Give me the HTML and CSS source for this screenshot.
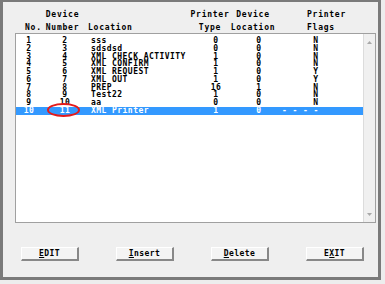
FILE: index.html
```html
<!DOCTYPE html>
<html lang="en">
<head>
<meta charset="UTF-8" />
<title>Printer Setup</title>
<link rel="stylesheet" href="styles.css">
</head>
<body>
<div class="window">
  <div class="head-row">
    <span></span>
    <span class="center">Device</span>
    <span></span>
    <span class="center">Printer</span>
    <span class="center">Device</span>
    <span class="flags-head">Printer</span>
  </div>
  <div class="head-row second">
    <span class="no-head">No.</span>
    <span class="center">Number</span>
    <span class="loc-head">Location</span>
    <span class="center">Type</span>
    <span class="center">Location</span>
    <span class="flags-head">Flags</span>
  </div>

  <div class="list-box">
    <div class="rows" id="rows"></div>
    <div class="scroll">
      <svg width="5" height="3" viewBox="0 0 5 3"><path d="M0 3 L2.5 0 L5 3 Z" fill="#a8a8a8"/></svg>
      <svg width="5" height="3" viewBox="0 0 5 3"><path d="M0 0 L2.5 3 L5 0 Z" fill="#a8a8a8"/></svg>
    </div>
  </div>

  <div class="buttons">
    <button><u>E</u>DIT</button>
    <button><u>I</u>nsert</button>
    <button><u>D</u>elete</button>
    <button>E<u>X</u>IT</button>
  </div>
</div>

<script>
  const printers = [
    [1, 2, 'sss', 0, 0, 'N'],
    [2, 3, 'sdsdsd', 0, 0, 'N'],
    [3, 4, 'XML CHECK ACTIVITY', 1, 0, 'N'],
    [4, 5, 'XML CONFIRM', 1, 0, 'N'],
    [5, 6, 'XML REQUEST', 1, 0, 'Y'],
    [6, 7, 'XML OUT', 1, 0, 'Y'],
    [7, 8, 'PREP', 16, 1, 'N'],
    [8, 9, 'Test22', 1, 0, 'N'],
    [9, 10, 'aa', 0, 0, 'N'],
    [10, 11, 'XML Printer', 1, 0, '- - - -']
  ];
  const rows = document.getElementById('rows');
  printers.forEach((p, i) => {
    const row = document.createElement('div');
    const last = i === printers.length - 1;
    row.className = 'row' + (last ? ' selected' : '');
    row.innerHTML = `
      <span class="center">${p[0]}</span>
      <span class="center${last ? ' circled' : ''}">${p[1]}</span>
      <span class="loc">${p[2]}</span>
      <span class="center">${p[3]}</span>
      <span class="center">${p[4]}</span>
      <span class="${last ? 'dashes' : 'center'}">${p[5]}</span>
    `;
    rows.appendChild(row);
  });
</script>
</body>
</html>
```

FILE: styles.css
```css
body {
  margin: 0;
  background: #ededed;
  font-family: 'DejaVu Sans Mono', 'Liberation Mono', monospace;
  font-weight: bold;
  font-size: 8px;
  letter-spacing: 0.45px;
  color: #000;
}
.window {
  width: 381px;
  height: 280px;
  box-sizing: border-box;
  border: 3px solid #7a7a7a;
  border-top-width: 2px;
  background: #efefef;
  padding: 8px 2px 0 12px;
}
.head-row {
  display: grid;
  grid-template-columns: 29px 35px 110px 40px 46px 1fr;
  padding-left: 1px;
  line-height: 10px;
  height: 10px;
  letter-spacing: 0.75px;
  white-space: nowrap;
}
.head-row.second {
  margin-top: 3px;
}
.center {
  text-align: center;
}
.no-head {
  padding-left: 9px;
}
.loc-head {
  padding-left: 8px;
}
.flags-head {
  padding-left: 31px;
}
.list-box {
  display: flex;
  height: 190px;
  box-sizing: border-box;
  border: 1px solid #a0a0a0;
  background: #fff;
}
.rows {
  flex: 1;
  padding-top: 3.2px;
}
.row {
  display: grid;
  grid-template-columns: 26px 46px 108px 40px 46px 68px 1fr;
  line-height: 7.75px;
  height: 7.75px;
  white-space: nowrap;
}
.row .loc {
  padding-left: 3px;
}
.row.selected {
  background: #3399ff;
  color: #fff;
}
.circled {
  position: relative;
}
.circled::after {
  content: '';
  position: absolute;
  left: 5px;
  top: -4px;
  width: 29px;
  height: 10px;
  border: 2px solid #e41b1b;
  border-radius: 50%;
}
.scroll {
  width: 11px;
  border-left: 1px solid #dcdcdc;
  background: #f0f0f0;
  display: flex;
  flex-direction: column;
  justify-content: space-between;
  align-items: center;
  padding: 7px 0 6px;
}
.buttons {
  display: flex;
  gap: 37px;
  margin-top: 24px;
  padding-left: 6px;
}
button {
  width: 58px;
  height: 14px;
  box-sizing: border-box;
  padding: 0;
  background: #f4f4f4;
  border-top: 1px solid #fff;
  border-left: 1px solid #fff;
  border-right: 2px solid #888;
  border-bottom: 2px solid #888;
  font-family: inherit;
  font-weight: bold;
  font-size: 8px;
  letter-spacing: 0.45px;
  line-height: 10px;
  color: #000;
}
```
